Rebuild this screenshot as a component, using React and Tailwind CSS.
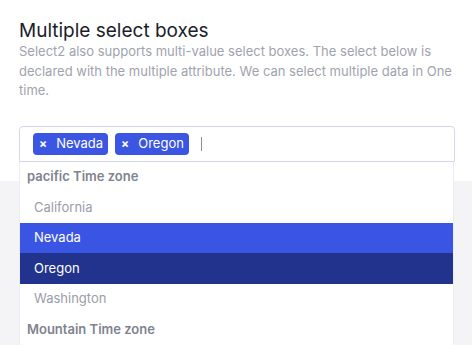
export default function App() {
  const rows = [
    { label: "pacific Time zone", type: "group" },
    { label: "California", type: "option" },
    { label: "Nevada", type: "hover" },
    { label: "Oregon", type: "selected" },
    { label: "Washington", type: "option" },
    { label: "Mountain Time zone", type: "group" },
  ];

  return (
    <div className="w-[474px] h-[348px] overflow-hidden bg-white font-['Inter','Liberation_Sans',sans-serif]">
      <div className="pl-[19px] pr-[19px] pt-[19px]">
        <h2 className="text-[19px] leading-[24px] font-normal text-[#1b1d2b]">
          Multiple select boxes
        </h2>
        <p className="mt-[-1px] text-[13px] leading-[19.5px] text-[#a0a3ad]">
          Select2 also supports multi-value select boxes. The select below is
          declared with the multiple attribute. We can select multiple data in One
          time.
        </p>

        <div className="relative mt-[25px]">
          <div className="flex h-[36px] items-center gap-[7px] rounded-t-[4px] border border-[#d3d6ee] px-[13px]">
            {["Nevada", "Oregon"].map((t) => (
              <span
                key={t}
                className="flex h-[22px] items-center gap-[9px] rounded-[4px] bg-[#3b56e2] pl-[6px] pr-[5px] text-[13px] text-white"
              >
                <span className="text-[12px] font-bold leading-none">×</span>
                {t}
              </span>
            ))}
            <span className="ml-[5px] h-[14px] w-px bg-[#8a8d99]"></span>
          </div>

          <div className="absolute left-0 right-[1px] top-full z-10 border-x border-[#ececf2] bg-white">
            {rows.map((r) => (
              <div
                key={r.label}
                className={
                  r.type === "group"
                    ? "flex h-[30.6px] items-center pl-[7px] text-[13px] font-semibold text-[#80838f]"
                    : r.type === "hover"
                    ? "flex h-[30.6px] items-center bg-[#3a55e4] pl-[14px] text-[13px] text-white"
                    : r.type === "selected"
                    ? "flex h-[30.6px] items-center bg-[#22338e] pl-[14px] text-[13px] text-white"
                    : "flex h-[30.6px] items-center pl-[14px] text-[13px] text-[#9a9daa]"
                }
              >
                {r.label}
              </div>
            ))}
          </div>
        </div>
      </div>

      <div className="mr-[2px] mt-[19px] h-[164px] bg-[#f4f4f6]"></div>
    </div>
  );
}
